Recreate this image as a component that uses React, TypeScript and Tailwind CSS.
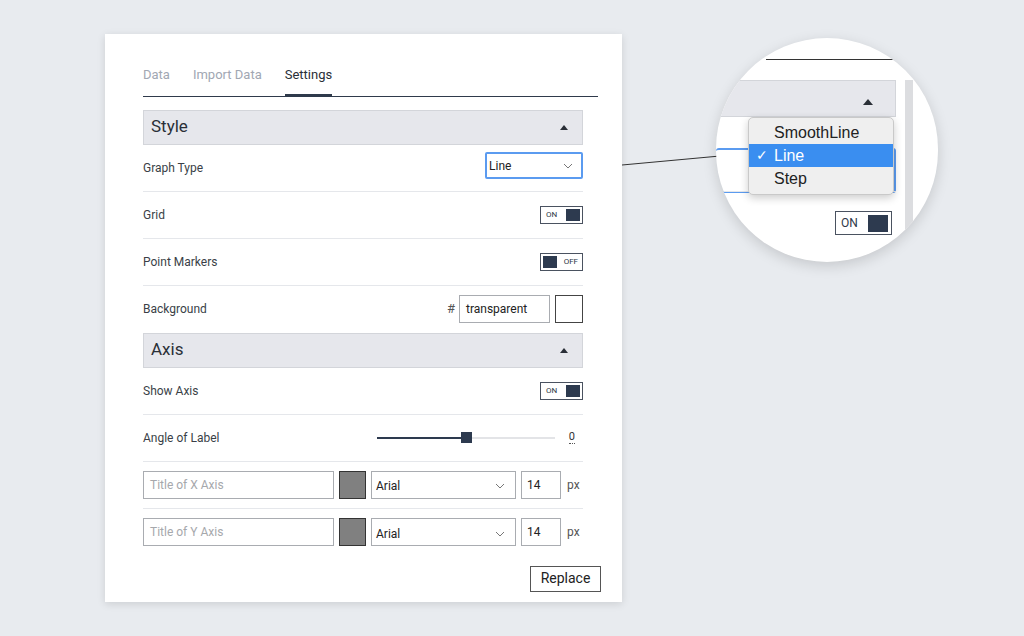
import React from "react";

const font = { fontFamily: "Roboto, 'Noto Sans', sans-serif" };

function Toggle({ on }: { on: boolean }) {
  return (
    <div className="w-[43px] h-[18px] border border-[#4a5260] flex items-center px-[2px] text-[8px] text-[#2d3848]">
      {on ? (
        <>
          <span className="ml-[3px] flex-1">ON</span>
          <span className="w-[14px] h-[12px] bg-[#2d3a4f]" />
        </>
      ) : (
        <>
          <span className="w-[14px] h-[12px] bg-[#2d3a4f]" />
          <span className="flex-1 text-right mr-[2px]">OFF</span>
        </>
      )}
    </div>
  );
}

function Row({ label, children, last }: { label: string; children: React.ReactNode; last?: boolean }) {
  return (
    <div className={`h-[47px] flex items-center justify-between ${last ? "" : "border-b border-[#e5e7eb]"}`}>
      <span className="text-[12px] text-[#3a3f47]">{label}</span>
      {children}
    </div>
  );
}

function Header({ title }: { title: string }) {
  return (
    <div className="h-[35px] bg-[#e6e7ec] border border-[#d3d5da] flex items-center justify-between px-[7px] pr-[14px]">
      <span className="text-[17px] text-[#2a2f37]">{title}</span>
      <svg width="8" height="5" viewBox="0 0 8 5"><path d="M0 5L4 0L8 5Z" fill="#2a2f37" /></svg>
    </div>
  );
}

function Chevron() {
  return (
    <svg width="10" height="6" viewBox="0 0 10 6"><path d="M1 1L5 5L9 1" stroke="#777" fill="none" strokeWidth="1" /></svg>
  );
}

function AxisRow({ ph, last }: { ph: string; last?: boolean }) {
  return (
    <div className={`h-[47px] flex items-center gap-[5px] ${last ? "" : "border-b border-[#e5e7eb]"}`}>
      <div className="w-[191px] h-[28px] border border-[#a9acb1] flex items-center px-[6px] text-[12px] text-[#a6a8ac]">{ph}</div>
      <div className="w-[27px] h-[28px] bg-[#808080] border border-[#333]" />
      <div className="w-[145px] h-[28px] border border-[#a9acb1] flex items-center justify-between px-[4px] pr-[10px] text-[12px] text-[#222] pt-[3px]">
        <span>Arial</span>
        <Chevron />
      </div>
      <div className="w-[40px] h-[28px] border border-[#a9acb1] flex items-center px-[5px] text-[12px] text-[#222]">14</div>
      <span className="text-[12px] text-[#555] ml-[1px]">px</span>
    </div>
  );
}

export default function App() {
  return (
    <div className="w-[1024px] h-[636px] bg-[#e8ebef] relative overflow-hidden" style={font}>
      {/* Panel */}
      <div className="absolute left-[105px] top-[34px] w-[517px] h-[568px] bg-white shadow-[0_2px_8px_rgba(0,0,0,0.12)]">
        <div className="pl-[38px] pr-[24px] pt-[31px]">
          <div className="flex gap-[23px] border-b border-[#2f3a4b] w-[455px] text-[13px]">
            <span className="text-[#a1a7b3] pb-[11px]">Data</span>
            <span className="text-[#a1a7b3] pb-[11px]">Import Data</span>
            <span className="text-[#2a2f37] pb-[9px] border-b-[3px] border-[#2f3a4b] -mb-px">Settings</span>
          </div>
          <div className="w-[440px] mt-[13px]">
            <Header title="Style" />
            <Row label="Graph Type">
              <div className="w-[98px] h-[27px] border-2 border-[#5b9bf0] rounded-[2px] flex items-center justify-between px-[2px] pr-[8px] text-[12px] text-[#222] mb-[4px]">
                <span>Line</span>
                <Chevron />
              </div>
            </Row>
            <Row label="Grid"><Toggle on /></Row>
            <Row label="Point Markers"><Toggle on={false} /></Row>
            <Row label="Background" last>
              <div className="flex items-center gap-[4px]">
                <span className="text-[13px] text-[#555]">#</span>
                <div className="w-[91px] h-[28px] border border-[#a9acb1] flex items-center px-[6px] text-[12px] text-[#222]">transparent</div>
                <div className="w-[28px] h-[28px] border border-[#444] ml-[1px]" />
              </div>
            </Row>
            <Header title="Axis" />
            <Row label="Show Axis"><Toggle on /></Row>
            <Row label="Angle of Label">
              <div className="flex items-center gap-[14px]">
                <div className="relative w-[178px] h-[12px] flex items-center">
                  <div className="w-[88px] h-[2px] bg-[#2d3a4f]" />
                  <div className="flex-1 h-[2px] bg-[#e3e4e7]" />
                  <div className="absolute left-[84px] w-[11px] h-[11px] bg-[#2d3a4f]" />
                </div>
                <span className="text-[11px] text-[#333] border-b border-dotted border-[#555] leading-[12px] mr-[8px]">0</span>
              </div>
            </Row>
            <AxisRow ph="Title of X Axis" />
            <AxisRow ph="Title of Y Axis" last />
          </div>
          <div className="flex justify-end mt-[10px] mr-[-3px]">
            <div className="w-[71px] h-[26px] border border-[#555] flex items-center justify-center text-[14px] text-[#222]">Replace</div>
          </div>
        </div>
      </div>

      {/* Connector line */}
      <svg className="absolute left-0 top-0" width="1024" height="636">
        <line x1="622" y1="165" x2="720" y2="156" stroke="#333" strokeWidth="1" />
      </svg>

      {/* Magnifier */}
      <div className="absolute left-[716px] top-[38px] w-[222px] h-[224px] rounded-full bg-white overflow-hidden shadow-[0_4px_14px_rgba(0,0,0,0.15)]">
        <div className="absolute left-[50px] top-[21px] w-[140px] h-px bg-[#333]" />
        <div className="absolute left-0 top-[42px] w-[180px] h-[37px] bg-[#e6e7ec] border border-[#d3d5da]" />
        <svg className="absolute left-[147px] top-[61px]" width="10" height="6" viewBox="0 0 10 6"><path d="M0 6L5 0L10 6Z" fill="#2a2f37" /></svg>
        <div className="absolute left-[189px] top-[42px] w-[8px] h-[190px] bg-[#dcdde0]" />
        <div className="absolute left-[0px] top-[110px] w-[180px] h-[45px] border-2 border-[#5b9bf0] rounded-[3px] border-l-0" />
        <div className="absolute left-0 top-[153px] w-[180px] h-px bg-[#e5e7eb]" />
        <div className="absolute left-[119px] top-[173px] w-[57px] h-[24px] border border-[#4a5260] flex items-center px-[3px] text-[12px] text-[#2d3848]">
          <span className="flex-1 ml-[2px]">ON</span>
          <span className="w-[20px] h-[17px] bg-[#2d3a4f]" />
        </div>
        <div className="absolute left-[32px] top-[79px] w-[146px] h-[78px] bg-[#efefef] border border-[#c9c9c9] rounded-[5px] shadow-[0_3px_8px_rgba(0,0,0,0.2)] py-[3px] text-[16px] text-[#222]" style={{ fontFamily: "'Liberation Sans', Arial, sans-serif" }}>
          <div className="h-[23px] flex items-center pl-[25px]">SmoothLine</div>
          <div className="h-[23px] flex items-center bg-[#3a8ef0] text-white"><span className="w-[25px] text-center text-[14px]">✓</span>Line</div>
          <div className="h-[23px] flex items-center pl-[25px]">Step</div>
        </div>
      </div>
    </div>
  );
}
